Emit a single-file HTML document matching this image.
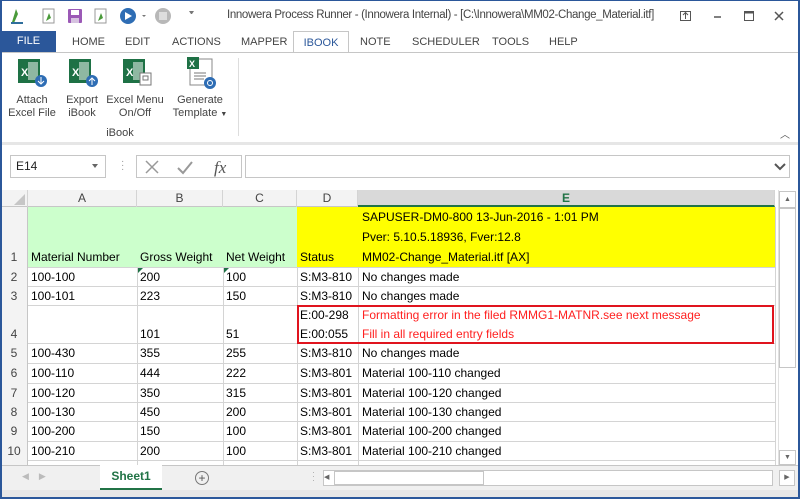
<!DOCTYPE html>
<html><head><meta charset="utf-8"><style>
*{margin:0;padding:0;box-sizing:border-box}
body{width:800px;height:499px;overflow:hidden;background:#fff;font-family:"Liberation Sans",sans-serif;position:relative;color:#000}
.a{position:absolute}
.win{position:absolute;left:0;top:0;width:800px;height:499px;border:1px solid #2b579a;border-width:1px 2px 2px 2px}
.tab{position:absolute;top:36px;font-size:11px;color:#444}
.rb{position:absolute;font-size:11px;color:#444;text-align:center;line-height:13px;white-space:nowrap}
.cell{position:absolute;font-size:12px;white-space:nowrap;line-height:19px}
.hl{position:absolute;left:28px;width:747px;height:1px;background:#d4d4d4}
.vl{position:absolute;width:1px;background:#d4d4d4}
.rn{position:absolute;left:0;width:28px;text-align:center;font-size:12px;color:#444}
.ch{position:absolute;top:190px;height:17px;font-size:12px;color:#444;text-align:center;line-height:17px;border-right:1px solid #d4d4d4}
</style></head><body>
<div class="a" style="left:0;top:0;width:800px;height:31px;background:#fff"></div>
<svg class="a" style="left:8px;top:6px" width="170" height="20">
<path d="M4 16 L8 3 L10 8 L6 17Z" fill="#4a9a3a"/><path d="M3 17h12" stroke="#2f6e9c" stroke-width="2"/>
<rect x="35" y="3" width="11" height="14" fill="#fff" stroke="#999"/><path d="M38 15 L41 7 L43 12Z" fill="#4a9a3a"/>
<rect x="60" y="3" width="14" height="14" rx="1" fill="#9b59b6"/><rect x="63" y="4" width="8" height="5" fill="#fff"/><rect x="63" y="12" width="8" height="5" fill="#d6c2e0"/>
<rect x="87" y="3" width="11" height="14" fill="#fff" stroke="#999"/><path d="M90 15 L93 7 L95 12Z" fill="#4a9a3a"/>
<circle cx="120" cy="10" r="8" fill="#2e6db4"/><path d="M117 6 L124 10 L117 14Z" fill="#fff"/>
<path d="M134 9h4l-2 2z" fill="#777"/>
<circle cx="155" cy="10" r="8" fill="#b8b8b8"/><rect x="151" y="6" width="8" height="8" fill="#ddd"/>
</svg>
<div class="a" style="left:189px;top:11px;width:5px;height:3px;border-top:3px solid #777;border-left:2px solid transparent;border-right:2px solid transparent"></div>
<div class="a" style="left:227px;top:9px;font-size:11.5px;letter-spacing:-0.35px;color:#444;white-space:nowrap">Innowera Process Runner - (Innowera Internal) - [C:\Innowera\MM02-Change_Material.itf]</div>
<svg class="a" style="left:680px;top:8px" width="115" height="16">
<rect x="0.5" y="3.5" width="10" height="9" fill="none" stroke="#555"/><path d="M5.5 5v6M3 7l2.5-2.5L8 7" stroke="#555" fill="none"/>
<path d="M34 9h7" stroke="#555" stroke-width="1.5"/>
<rect x="64.5" y="3.5" width="9" height="9" fill="none" stroke="#555"/><path d="M64 4.5h10" stroke="#555" stroke-width="2"/>
<path d="M95 4l8 8M103 4l-8 8" stroke="#555" stroke-width="1.5"/>
</svg>
<div class="a" style="left:1px;top:31px;width:55px;height:21px;background:#2b579a;color:#fff;font-size:11px;text-align:center;line-height:21px">FILE</div>
<div class="tab" style="left:72px">HOME</div>
<div class="tab" style="left:125px">EDIT</div>
<div class="tab" style="left:172px">ACTIONS</div>
<div class="tab" style="left:241px">MAPPER</div>
<div class="a" style="left:293px;top:31px;width:56px;height:22px;border:1px solid #c6c6c6;border-bottom:none;background:#fff;color:#2b579a;font-size:11px;text-align:center;line-height:22px">IBOOK</div>
<div class="tab" style="left:360px">NOTE</div>
<div class="tab" style="left:412px">SCHEDULER</div>
<div class="tab" style="left:492px">TOOLS</div>
<div class="tab" style="left:549px">HELP</div>
<div class="a" style="left:2px;top:52px;width:796px;height:1px;background:#c6c6c6"></div>
<svg class="a" style="left:15px;top:57px" width="220" height="34">
<g><rect x="3" y="2" width="22" height="24" fill="#1e7145"/><rect x="13" y="5" width="10" height="18" fill="#fff" opacity=".5"/><text x="6" y="19" font-size="11" fill="#fff" font-family="Liberation Sans" font-weight="bold">X</text><circle cx="26" cy="24" r="6" fill="#2e6db4"/><path d="M26 20v7M23 24l3 3 3-3" stroke="#fff" fill="none"/></g>
<g transform="translate(51,0)"><rect x="3" y="2" width="22" height="24" fill="#1e7145"/><rect x="13" y="5" width="10" height="18" fill="#fff" opacity=".5"/><text x="6" y="19" font-size="11" fill="#fff" font-family="Liberation Sans" font-weight="bold">X</text><circle cx="26" cy="24" r="6" fill="#2e6db4"/><path d="M26 28v-7M23 24l3-3 3 3" stroke="#fff" fill="none"/></g>
<g transform="translate(105,0)"><rect x="3" y="2" width="22" height="24" fill="#1e7145"/><rect x="13" y="5" width="10" height="18" fill="#fff" opacity=".5"/><text x="6" y="19" font-size="11" fill="#fff" font-family="Liberation Sans" font-weight="bold">X</text><rect x="20" y="16" width="11" height="12" fill="#fff" stroke="#777"/><rect x="23" y="19" width="5" height="4" fill="none" stroke="#777"/></g>
<g transform="translate(170,0)"><rect x="5" y="2" width="22" height="26" fill="#fff" stroke="#888"/><rect x="2" y="0" width="12" height="12" fill="#1e7145"/><text x="4" y="10" font-size="9" fill="#fff" font-family="Liberation Sans" font-weight="bold">X</text><path d="M9 16h12M9 19h12M9 22h10" stroke="#777"/><circle cx="25" cy="26" r="6" fill="#2e6db4"/><circle cx="25" cy="26" r="2.5" fill="none" stroke="#fff"/></g>
</svg>
<div class="rb" style="left:8px;top:94px;width:48px">Attach<br>Excel File</div>
<div class="rb" style="left:58px;top:94px;width:48px">Export<br>iBook</div>
<div class="rb" style="left:105px;top:94px;width:60px">Excel Menu<br>On/Off</div>
<div class="rb" style="left:168px;top:94px;width:64px">Generate<br>Template <span style="font-size:7px">▼</span></div>
<div class="rb" style="left:100px;top:127px;width:40px">iBook</div>
<div class="a" style="left:238px;top:58px;width:1px;height:78px;background:#ddd"></div>
<div class="a" style="left:780px;top:126px;font-size:10px;color:#555">︿</div>
<div class="a" style="left:2px;top:142px;width:796px;height:355px;background:#e6e6e6"></div>
<div class="a" style="left:2px;top:145px;width:796px;height:342px;background:#fff"></div>
<div class="a" style="left:10px;top:155px;width:96px;height:23px;border:1px solid #c6c6c6;background:#fff;font-size:12px;line-height:21px;padding-left:5px;color:#222">E14</div>
<div class="a" style="left:92px;top:164px;border-top:4px solid #666;border-left:3px solid transparent;border-right:3px solid transparent"></div>
<div class="a" style="left:121px;top:160px;color:#999;font-size:10px;line-height:4px">·<br>·<br>·</div>
<div class="a" style="left:136px;top:155px;width:106px;height:23px;border:1px solid #c6c6c6"></div>
<svg class="a" style="left:140px;top:157px" width="100" height="20"><path d="M6 4l12 12M18 4l-12 12" stroke="#999" stroke-width="1.5"/><path d="M38 11l5 5 9-11" stroke="#999" stroke-width="2" fill="none"/><text x="74" y="16" font-size="17" font-style="italic" font-family="Liberation Serif" fill="#555">fx</text></svg>
<div class="a" style="left:245px;top:155px;width:545px;height:23px;border:1px solid #c6c6c6"></div>
<svg class="a" style="left:774px;top:162px" width="12" height="10"><path d="M1 2l5 5 5-5" stroke="#555" stroke-width="2" fill="none"/></svg>
<div class="a" style="left:2px;top:190px;width:773px;height:17px;background:#f3f3f3;border-bottom:1px solid #c6c6c6"></div>
<div class="a" style="left:14px;top:194px;border-bottom:11px solid #c6c6c6;border-left:11px solid transparent"></div>
<div class="ch" style="left:2px;width:26px"></div>
<div class="ch" style="left:28px;width:109px">A</div>
<div class="ch" style="left:137px;width:86px">B</div>
<div class="ch" style="left:223px;width:74px">C</div>
<div class="ch" style="left:297px;width:61px">D</div>
<div class="ch" style="left:358px;width:417px;background:#d9d9d9;color:#217346;font-weight:bold;border-bottom:2px solid #217346">E</div>
<div class="a" style="left:2px;top:207px;width:26px;height:258px;background:#f3f3f3;border-right:1px solid #c6c6c6"></div>
<div class="a" style="left:28px;top:207px;width:269px;height:60px;background:#ccffcc"></div>
<div class="a" style="left:297px;top:207px;width:478px;height:60px;background:#ffff00"></div>
<div class="hl" style="top:267px"></div><div class="hl" style="top:286px"></div><div class="hl" style="top:305px"></div><div class="hl" style="top:343px"></div><div class="hl" style="top:363px"></div><div class="hl" style="top:383px"></div><div class="hl" style="top:402px"></div><div class="hl" style="top:421px"></div><div class="hl" style="top:441px"></div><div class="hl" style="top:460px"></div>
<div class="vl" style="left:137px;top:267px;height:198px"></div><div class="vl" style="left:223px;top:267px;height:198px"></div><div class="vl" style="left:297px;top:267px;height:198px"></div><div class="vl" style="left:358px;top:267px;height:198px"></div><div class="vl" style="left:775px;top:207px;height:258px"></div>
<div class="rn" style="top:250px">1</div><div class="rn" style="top:270px">2</div><div class="rn" style="top:289px">3</div><div class="rn" style="top:327px">4</div><div class="rn" style="top:346px">5</div><div class="rn" style="top:366px">6</div><div class="rn" style="top:386px">7</div><div class="rn" style="top:405px">8</div><div class="rn" style="top:424px">9</div><div class="rn" style="top:444px">10</div>
<div class="cell" style="left:31px;top:248px">Material Number</div>
<div class="cell" style="left:140px;top:248px">Gross Weight</div>
<div class="cell" style="left:226px;top:248px">Net Weight</div>
<div class="cell" style="left:300px;top:248px">Status</div>
<div class="cell" style="left:362px;top:208px">SAPUSER-DM0-800 13-Jun-2016 - 1:01 PM</div>
<div class="cell" style="left:362px;top:228px">Pver: 5.10.5.18936, Fver:12.8</div>
<div class="cell" style="left:362px;top:248px">MM02-Change_Material.itf [AX]</div>
<div class="a" style="left:138px;top:268px;border-top:5px solid #1e7145;border-right:5px solid transparent"></div>
<div class="a" style="left:224px;top:268px;border-top:5px solid #1e7145;border-right:5px solid transparent"></div>
<div class="cell" style="left:31px;top:268px">100-100</div><div class="cell" style="left:140px;top:268px">200</div><div class="cell" style="left:226px;top:268px">100</div><div class="cell" style="left:300px;top:268px">S:M3-810</div><div class="cell" style="left:362px;top:268px">No changes made</div>
<div class="cell" style="left:31px;top:287px">100-101</div><div class="cell" style="left:140px;top:287px">223</div><div class="cell" style="left:226px;top:287px">150</div><div class="cell" style="left:300px;top:287px">S:M3-810</div><div class="cell" style="left:362px;top:287px">No changes made</div>
<div class="cell" style="left:140px;top:325px">101</div><div class="cell" style="left:226px;top:325px">51</div>
<div class="cell" style="left:300px;top:306px">E:00-298</div><div class="cell" style="left:300px;top:325px">E:00:055</div>
<div class="cell" style="left:362px;top:306px;color:#ff2020">Formatting error in the filed RMMG1-MATNR.see next message</div>
<div class="cell" style="left:362px;top:325px;color:#ff2020">Fill in all required entry fields</div>
<div class="a" style="left:297px;top:305px;width:477px;height:39px;border:2px solid #e0141e"></div>
<div class="cell" style="left:31px;top:344px">100-430</div><div class="cell" style="left:140px;top:344px">355</div><div class="cell" style="left:226px;top:344px">255</div><div class="cell" style="left:300px;top:344px">S:M3-810</div><div class="cell" style="left:362px;top:344px">No changes made</div>
<div class="cell" style="left:31px;top:364px">100-110</div><div class="cell" style="left:140px;top:364px">444</div><div class="cell" style="left:226px;top:364px">222</div><div class="cell" style="left:300px;top:364px">S:M3-801</div><div class="cell" style="left:362px;top:364px">Material 100-110 changed</div>
<div class="cell" style="left:31px;top:384px">100-120</div><div class="cell" style="left:140px;top:384px">350</div><div class="cell" style="left:226px;top:384px">315</div><div class="cell" style="left:300px;top:384px">S:M3-801</div><div class="cell" style="left:362px;top:384px">Material 100-120 changed</div>
<div class="cell" style="left:31px;top:403px">100-130</div><div class="cell" style="left:140px;top:403px">450</div><div class="cell" style="left:226px;top:403px">200</div><div class="cell" style="left:300px;top:403px">S:M3-801</div><div class="cell" style="left:362px;top:403px">Material 100-130 changed</div>
<div class="cell" style="left:31px;top:422px">100-200</div><div class="cell" style="left:140px;top:422px">150</div><div class="cell" style="left:226px;top:422px">100</div><div class="cell" style="left:300px;top:422px">S:M3-801</div><div class="cell" style="left:362px;top:422px">Material 100-200 changed</div>
<div class="cell" style="left:31px;top:442px">100-210</div><div class="cell" style="left:140px;top:442px">200</div><div class="cell" style="left:226px;top:442px">100</div><div class="cell" style="left:300px;top:442px">S:M3-801</div><div class="cell" style="left:362px;top:442px">Material 100-210 changed</div>
<div class="a" style="left:778px;top:190px;width:19px;height:275px;background:#fff;border-left:1px solid #e0e0e0"></div>
<div class="a" style="left:779px;top:191px;width:17px;height:17px;border:1px solid #c6c6c6;font-size:7px;text-align:center;line-height:15px;color:#666">▲</div>
<div class="a" style="left:779px;top:208px;width:17px;height:160px;border:1px solid #c6c6c6;background:#fff"></div>
<div class="a" style="left:779px;top:450px;width:17px;height:15px;border:1px solid #c6c6c6;font-size:7px;text-align:center;line-height:13px;color:#666">▼</div>
<div class="a" style="left:2px;top:465px;width:796px;height:25px;background:#f0f0f0;border-top:1px solid #c6c6c6"></div>
<div class="a" style="left:22px;top:471px;font-size:9px;color:#bbb">◀&nbsp;&nbsp;&nbsp;&nbsp;▶</div>
<div class="a" style="left:100px;top:465px;width:62px;height:25px;background:#fff;border-bottom:2px solid #217346;color:#217346;font-weight:bold;font-size:12px;text-align:center;line-height:22px">Sheet1</div>
<div class="a" style="left:195px;top:471px;width:14px;height:14px;border:1px solid #777;border-radius:50%;font-size:12px;line-height:12px;text-align:center;color:#555">+</div>
<div class="a" style="left:312px;top:470px;color:#aaa;font-size:9px;line-height:4px">·<br>·<br>·</div>
<div class="a" style="left:323px;top:470px;width:450px;height:16px;border:1px solid #c6c6c6;background:#fff"></div>
<div class="a" style="left:324px;top:471px;width:10px;height:14px;font-size:7px;color:#666;line-height:14px">◀</div>
<div class="a" style="left:334px;top:471px;width:150px;height:14px;border:1px solid #c6c6c6"></div>
<div class="a" style="left:779px;top:470px;width:16px;height:16px;border:1px solid #c6c6c6;background:#fff;font-size:7px;color:#666;text-align:center;line-height:14px">▶</div>
<div class="win"></div>
</body></html>
